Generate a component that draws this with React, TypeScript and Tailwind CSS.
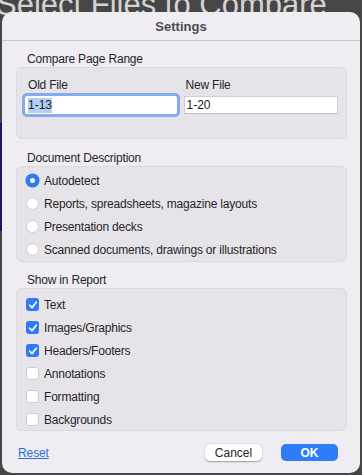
import React, { useState } from 'react';

const font = { fontFamily: '"Liberation Sans", Arial, sans-serif' };

function Radio({ checked, label }: { checked: boolean; label: string }) {
  return (
    <div className="flex items-center h-[23px] gap-[5px]">
      {checked ? (
        <span className="w-[13px] h-[13px] rounded-full bg-[#2f7bf5] flex items-center justify-center shadow-[0_0_0_0.5px_#2a6fe0]">
          <span className="w-[5px] h-[5px] rounded-full bg-white" />
        </span>
      ) : (
        <span className="w-[13px] h-[13px] rounded-full bg-white border border-[#cfcdd2]" />
      )}
      <span className="text-[12px] tracking-[-0.2px] text-[#262626]">{label}</span>
    </div>
  );
}

function Check({ checked, label }: { checked: boolean; label: string }) {
  return (
    <div className="flex items-center h-[23px] gap-[5px]">
      {checked ? (
        <span className="w-[13px] h-[13px] rounded-[3px] bg-[#2f7bf5] flex items-center justify-center">
          <svg width="10" height="10" viewBox="0 0 10 10">
            <path d="M1.8 5.2 L4 7.6 L8.3 2.2" fill="none" stroke="white" strokeWidth="1.7" strokeLinecap="round" strokeLinejoin="round" />
          </svg>
        </span>
      ) : (
        <span className="w-[13px] h-[13px] rounded-[3px] bg-white border border-[#cfcdd2]" />
      )}
      <span className="text-[12px] tracking-[-0.2px] text-[#262626]">{label}</span>
    </div>
  );
}

export default function App() {
  const [oldRange] = useState('1-13');
  const [newRange] = useState('1-20');

  return (
    <div className="relative w-[362px] h-[475px] bg-[#464646] overflow-hidden" style={font}>
      {/* backdrop title */}
      <div className="absolute left-[-4px] top-[-13px] text-[31px] leading-[36px] text-[#d4d4d4] whitespace-nowrap">
        Select Files to Compare
      </div>
      <div className="absolute left-0 top-[123px] w-[2px] h-[108px] bg-[#1b1470]" />

      {/* dialog */}
      <div className="absolute left-[2px] top-[12px] w-[358px] h-[461px] bg-[#efedf2] rounded-[10px] flex flex-col">
        <div className="h-[29px] flex items-center justify-center border-b border-[#cbc9ce]">
          <span className="text-[13px] font-bold text-[#4b4a4d] mt-[2px]">Settings</span>
        </div>

        <div className="px-[14px] pr-[13px] flex flex-col">
          {/* Compare Page Range */}
          <div className="h-[26px] flex items-end pl-[11px] text-[12px] leading-[16px] tracking-[-0.2px] text-[#262626]">Compare Page Range</div>
          <div className="h-[72px] rounded-[6px] bg-[#e6e4e9] border border-[#dcdadf] px-[8px] pt-[8px]">
            <div className="flex gap-[7px]">
              <div className="flex flex-col w-[152px]">
                <span className="pl-[3px] text-[12px] tracking-[-0.2px] text-[#262626] h-[16px]">Old File</span>
                <div className="mt-[4px] h-[18px] bg-white rounded-[2px] shadow-[0_0_0_3px_#86aaf0] flex items-center px-[3px]">
                  <span className="bg-[#b4cff5] text-[12px] text-[#1a1a1a] leading-[15px]">{oldRange}</span>
                </div>
              </div>
              <div className="flex flex-col w-[155px]">
                <span className="text-[12px] tracking-[-0.2px] text-[#262626] h-[16px] pl-[2px]">New File</span>
                <div className="mt-[4px] h-[18px] bg-white border border-[#d3d1d5] border-b-[#c0bec3] flex items-center px-[2px]">
                  <span className="text-[12px] text-[#1a1a1a]">{newRange}</span>
                </div>
              </div>
            </div>
          </div>

          {/* Document Description */}
          <div className="h-[27px] flex items-end pl-[11px] text-[12px] leading-[16px] tracking-[-0.2px] text-[#262626]">Document Description</div>
          <div className="h-[96px] rounded-[6px] bg-[#e6e4e9] border border-[#dcdadf] px-[9px] pt-[2px]">
            <Radio checked label="Autodetect" />
            <Radio checked={false} label="Reports, spreadsheets, magazine layouts" />
            <Radio checked={false} label="Presentation decks" />
            <Radio checked={false} label="Scanned documents, drawings or illustrations" />
          </div>

          {/* Show in Report */}
          <div className="h-[26px] flex items-end pl-[11px] text-[12px] leading-[16px] tracking-[-0.2px] text-[#262626]">Show in Report</div>
          <div className="h-[143px] rounded-[6px] bg-[#e6e4e9] border border-[#dcdadf] px-[9px] pt-[4px]">
            <Check checked label="Text" />
            <Check checked label="Images/Graphics" />
            <Check checked label="Headers/Footers" />
            <Check checked={false} label="Annotations" />
            <Check checked={false} label="Formatting" />
            <Check checked={false} label="Backgrounds" />
          </div>

          {/* footer */}
          <div className="flex items-center mt-[13px] h-[17px]">
            <span className="pl-[2px] text-[12px] tracking-[-0.1px] text-[#2d6fd6] underline">Reset</span>
            <div className="ml-auto flex gap-[19px] pr-[9px]">
              <button className="w-[57px] h-[17px] rounded-[5px] bg-white shadow-[0_0.5px_1.5px_rgba(0,0,0,0.35)] text-[12px] text-[#262626] leading-none">
                Cancel
              </button>
              <button className="w-[57px] h-[17px] rounded-[5px] bg-[#2f7df6] text-[12px] font-bold text-white leading-none">
                OK
              </button>
            </div>
          </div>
        </div>
      </div>
    </div>
  );
}
